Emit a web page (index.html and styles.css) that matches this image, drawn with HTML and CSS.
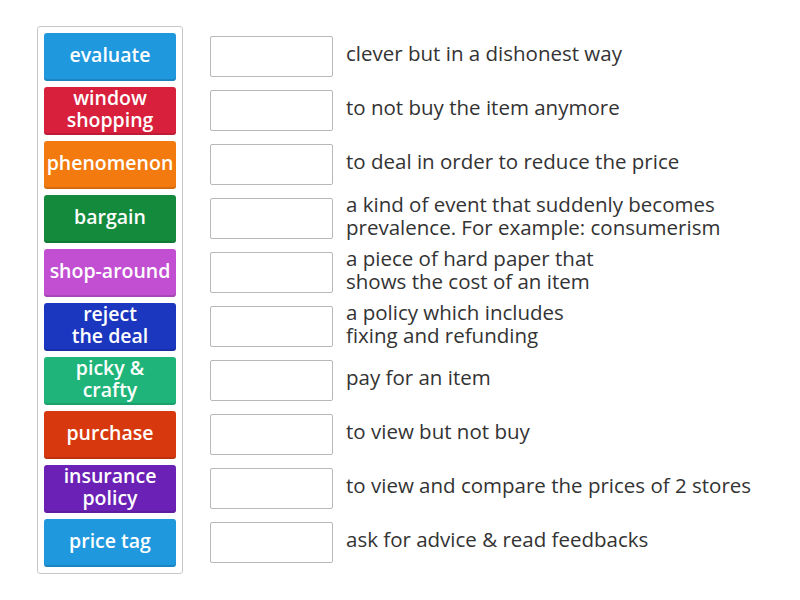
FILE: index.html
```html
<!DOCTYPE html>
<html>
<head>
<meta charset="utf-8">
<link rel="stylesheet" href="styles.css">
</head>
<body>
<div class="page">
  <div class="tiles">
    <div class="tile c1">evaluate</div>
    <div class="tile c2">window<br>shopping</div>
    <div class="tile c3">phenomenon</div>
    <div class="tile c4">bargain</div>
    <div class="tile c5">shop-around</div>
    <div class="tile c6">reject<br>the deal</div>
    <div class="tile c7">picky &amp;<br>crafty</div>
    <div class="tile c8">purchase</div>
    <div class="tile c9">insurance<br>policy</div>
    <div class="tile c1">price tag</div>
  </div>
  <div class="rows">
    <div class="row"><div class="slot"></div><div class="def">clever but in a dishonest way</div></div>
    <div class="row"><div class="slot"></div><div class="def">to not buy the item anymore</div></div>
    <div class="row"><div class="slot"></div><div class="def">to deal in order to reduce the price</div></div>
    <div class="row"><div class="slot"></div><div class="def">a kind of event that suddenly becomes<br>prevalence. For example: consumerism</div></div>
    <div class="row"><div class="slot"></div><div class="def">a piece of hard paper that<br>shows the cost of an item</div></div>
    <div class="row"><div class="slot"></div><div class="def">a policy which includes<br>fixing and refunding</div></div>
    <div class="row"><div class="slot"></div><div class="def">pay for an item</div></div>
    <div class="row"><div class="slot"></div><div class="def">to view but not buy</div></div>
    <div class="row"><div class="slot"></div><div class="def">to view and compare the prices of 2 stores</div></div>
    <div class="row"><div class="slot"></div><div class="def">ask for advice &amp; read feedbacks</div></div>
  </div>
</div>
</body>
</html>
```

FILE: styles.css
```css
html, body {
  margin: 0;
  padding: 0;
  background: #ffffff;
}
body {
  font-family: "Open Sans", "Liberation Sans", sans-serif;
  color: #333333;
}
.page {
  display: flex;
  align-items: flex-start;
  padding: 26px 0 0 37px;
}
.tiles {
  display: flex;
  flex-direction: column;
  gap: 6px;
  padding: 6px;
  border: 1px solid #c8c8c8;
  border-radius: 3px;
  width: 132px;
}
.tile {
  height: 48px;
  box-sizing: border-box;
  padding-bottom: 4px;
  border-radius: 3px;
  display: flex;
  align-items: center;
  justify-content: center;
  text-align: center;
  color: #ffffff;
  font-weight: 600;
  font-size: 19.5px;
  line-height: 22px;
  white-space: nowrap;
  box-shadow: inset 0 -2px 0 rgba(0,0,0,0.12);
}
.c1 { background: #1f98de; }
.c2 { background: #d8203c; }
.c3 { background: #f27a0e; }
.c4 { background: #138a3c; }
.c5 { background: #c24fd2; }
.c6 { background: #1b36bf; }
.c7 { background: #1fb57a; }
.c8 { background: #d8380e; }
.c9 { background: #6b20b6; }
.rows {
  display: flex;
  flex-direction: column;
  gap: 6px;
  margin-left: 27px;
  padding-top: 6px;
}
.row {
  height: 48px;
  display: flex;
  align-items: center;
}
.slot {
  width: 121px;
  height: 39px;
  border: 1px solid #b8b8b8;
  border-radius: 2px;
  flex: none;
}
.def {
  margin-left: 13px;
  padding-bottom: 5px;
  font-size: 20.5px;
  line-height: 23px;
  color: #333333;
  white-space: nowrap;
}
```
